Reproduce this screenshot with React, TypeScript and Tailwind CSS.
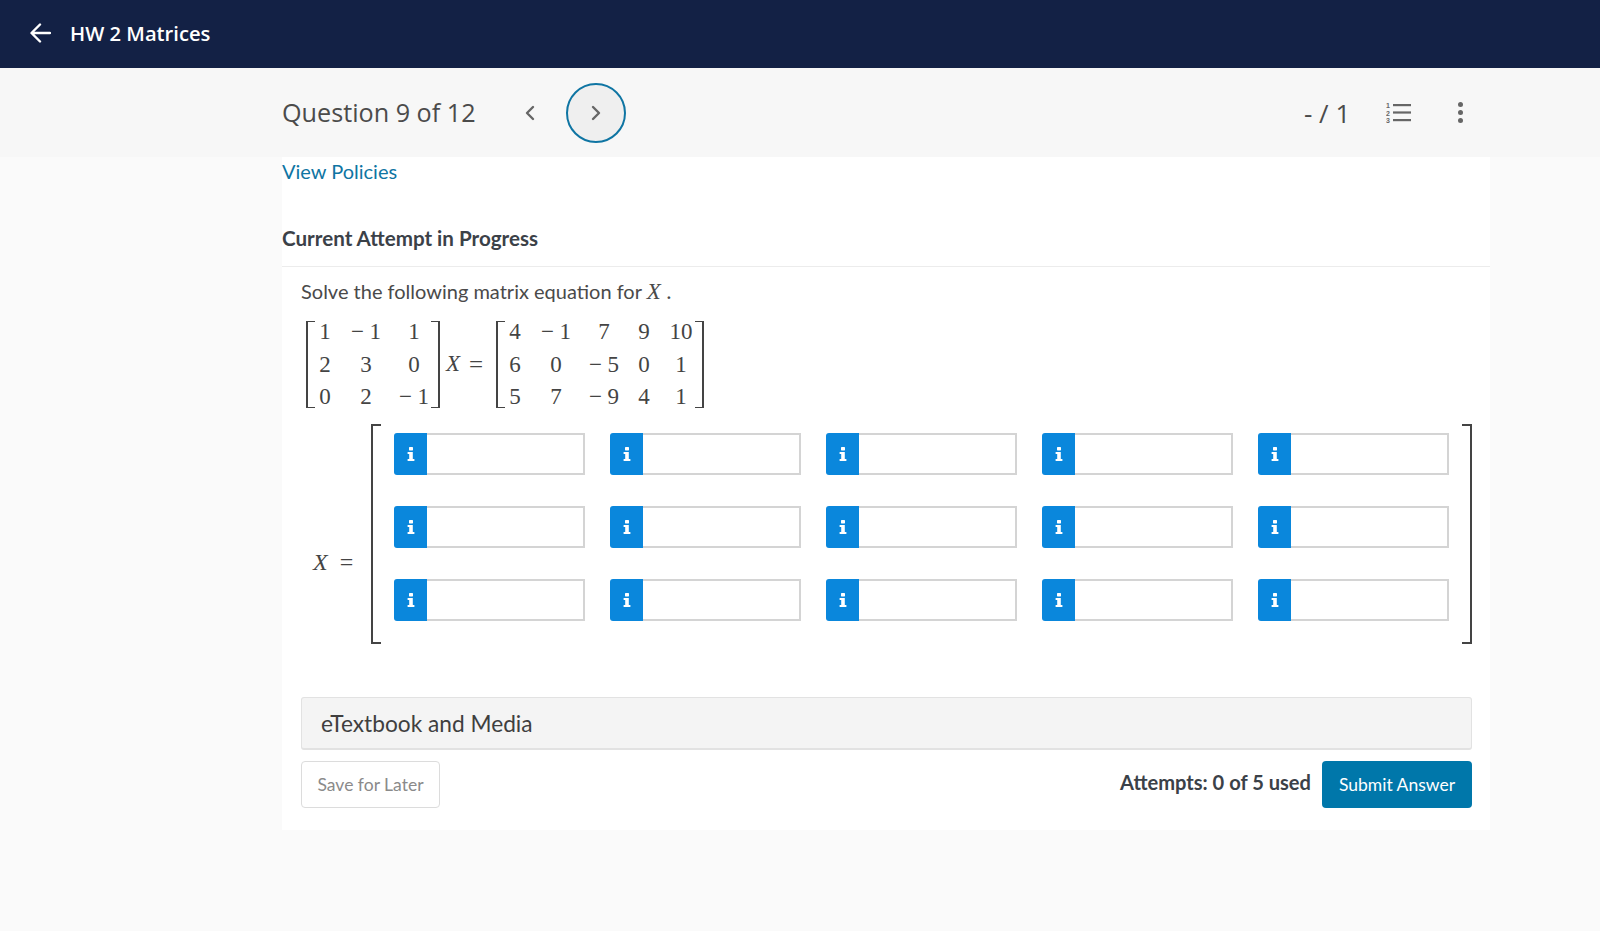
import React from "react";

const M1 = [["1", "− 1", "1"], ["2", "3", "0"], ["0", "2", "− 1"]];
const M2 = [["4", "− 1", "7", "9", "10"], ["6", "0", "− 5", "0", "1"], ["5", "7", "− 9", "4", "1"]];

function Bracket({ side }: { side: "l" | "r" }) {
  return (
    <div className={`w-[9px] h-[87px] border-y border-[#444] ${side === "l" ? "border-l-2" : "border-r-2"}`} />
  );
}

function SmallMatrix({ rows, cols }: { rows: string[][]; cols: string }) {
  return (
    <div className="flex items-center">
      <Bracket side="l" />
      <div className={`grid ${cols} auto-rows-[32.5px] items-center justify-items-center h-[87px] content-center pl-[1px] -mt-[1px]`}>
        {rows.flat().map((v, i) => (
          <span key={i} className="leading-none whitespace-nowrap">{v}</span>
        ))}
      </div>
      <div className="ml-[1px]"><Bracket side="r" /></div>
    </div>
  );
}

function InfoGlyph() {
  return (
    <svg width="8" height="14" viewBox="0 0 8 14" fill="#fff">
      <rect x="2" y="0" width="4" height="3.4" rx="0.6" />
      <path d="M0.6 5h5.2v7h1.6v2H0.6v-2h1.6V7H0.6z" />
    </svg>
  );
}

function Cell() {
  return (
    <div className="flex h-[42px] w-[191px]">
      <div className="w-[33px] bg-[#0a87dc] rounded-l-[3px] flex items-center justify-center">
        <InfoGlyph />
      </div>
      <div className="flex-1 bg-white border-2 border-l-0 border-[#d4d4d4]" />
    </div>
  );
}

export default function App() {
  return (
    <div className="min-h-screen bg-[#fafafa] text-[#43484d] font-['Lato',sans-serif]">
      <header className="h-[68px] bg-[#132145] flex items-center pl-[30px] text-white">
        <svg width="21" height="20" viewBox="0 0 21 20" fill="none" stroke="#fff" strokeWidth="2.4" strokeLinecap="round" strokeLinejoin="round" className="relative -top-[1px]">
          <path d="M20 10H2M10 1.5 1.5 10l8.5 8.500" />
        </svg>
        <span className="ml-[19px] text-[20.2px] font-semibold font-['Open_Sans',sans-serif] relative top-[-1px]">HW 2 Matrices</span>
      </header>

      <div className="h-[89px] bg-[#f7f7f7] flex items-center pl-[282px] font-['Open_Sans',sans-serif]">
        <span className="text-[25.2px] text-[#4b4b4b] w-[243px] leading-none whitespace-nowrap">Question 9 of 12</span>
        <svg width="11" height="16" viewBox="0 0 11 16" fill="none" stroke="#666" strokeWidth="2.400" strokeLinecap="round" strokeLinejoin="round" className="-ml-[1px]">
          <path d="M9 2 3 8l6 6" />
        </svg>
        <div className="ml-[31px] w-[60px] h-[60px] rounded-full border-2 border-[#0f75a3] bg-[#efefef] flex items-center justify-center">
          <svg width="11" height="16" viewBox="0 0 11 16" fill="none" stroke="#666" strokeWidth="2.400" strokeLinecap="round" strokeLinejoin="round">
            <path d="m2 2 6 6-6 6" />
          </svg>
        </div>
        <span className="ml-[678px] text-[26px] text-[#4b4b4b] w-[82px] leading-none whitespace-pre">- / 1</span>
        <svg width="25" height="21" viewBox="0 0 25 21" fill="#666">
          <text x="0" y="6" fontSize="7" fontFamily="Liberation Sans" fontWeight="700">1</text>
          <text x="0" y="13.500" fontSize="7" fontFamily="Liberation Sans" fontWeight="700">2</text>
          <text x="0" y="21" fontSize="7" fontFamily="Liberation Sans" fontWeight="700">3</text>
          <rect x="7" y="2" width="18" height="2.200" />
          <rect x="7" y="9.400" width="18" height="2.200" />
          <rect x="7" y="17" width="18" height="2.200" />
        </svg>
        <div className="ml-[47px] flex flex-col gap-[3px]">
          <div className="w-[5px] h-[5px] rounded-full bg-[#666]" />
          <div className="w-[5px] h-[5px] rounded-full bg-[#666]" />
          <div className="w-[5px] h-[5px] rounded-full bg-[#666]" />
        </div>
      </div>

      <main className="ml-[282px] w-[1208px] h-[673px] bg-white">
        <div className="h-[110px] border-b border-[#ececec]">
          <div className="h-[27px] flex items-center">
            <a className="text-[20px] text-[#0f75a3] leading-none">View Policies</a>
          </div>
          <h2 className="mt-[41px] text-[20.6px] font-bold text-[#3b4148] leading-[26px]">Current Attempt in Progress</h2>
        </div>

        <div className="pl-[19px] w-[1190px]">
          <p className="mt-[11px] text-[20px] leading-[26px] text-[#4a4a4a]">
            Solve the following matrix equation for{" "}
            <i className="font-['Liberation_Serif',serif] text-[23px]">X</i>{" "}
            <span className="font-['Liberation_Serif',serif] text-[23px]">.</span>
          </p>

          <div className="mt-[16px] ml-[5px] flex items-center font-['Liberation_Serif',serif] text-[23px] text-[#444] h-[87px]">
            <SmallMatrix rows={M1} cols="grid-cols-[18px_64px_32px]" />
            <span className="ml-[6px] w-[23px] italic">X</span>
            <span className="w-[27px] text-[25px] leading-none">=</span>
            <SmallMatrix rows={M2} cols="grid-cols-[18px_64px_32px_48px_26px]" />
          </div>

          <div className="mt-[16px] flex items-start font-['Liberation_Serif',serif] text-[24px] text-[#444]">
            <div className="w-[70px] pl-[12px] mt-[123px] whitespace-pre leading-[30px]"><i>X</i>  =</div>
            <div className="w-[10px] h-[220px] border-y-2 border-l-2 border-[#444]" />
            <div className="ml-[13px] mt-[9px] grid grid-cols-[repeat(5,191px)] gap-x-[25px] gap-y-[31px]">
              {Array.from({ length: 15 }).map((_, i) => (
                <Cell key={i} />
              ))}
            </div>
            <div className="ml-[13px] w-[10px] h-[220px] border-y-2 border-r-2 border-[#444]" />
          </div>

          <div className="mt-[53px] h-[53px] bg-[#f4f4f4] border border-[#e2e2e2] border-b-2 rounded-[3px] flex items-center pl-[19px] w-[1171px]">
            <span className="text-[22.7px] text-[#3f3f3f] leading-none relative top-[1px]">eTextbook and Media</span>
          </div>

          <div className="mt-[11px] flex items-center w-[1171px]">
            <button className="w-[139px] h-[47px] border border-[#dcdcdc] rounded-[4px] bg-white text-[17.5px] text-[#8a8a8a] pt-[2px]">Save for Later</button>
            <span className="ml-auto text-[20.1px] font-bold text-[#3b4148] relative -top-[2px]">Attempts: 0 of 5 used</span>
            <button className="ml-[11px] w-[150px] h-[47px] rounded-[4px] bg-[#0077aa] text-[17.500px] text-white pt-[2px]">Submit Answer</button>
          </div>
        </div>
      </main>
    </div>
  );
}
